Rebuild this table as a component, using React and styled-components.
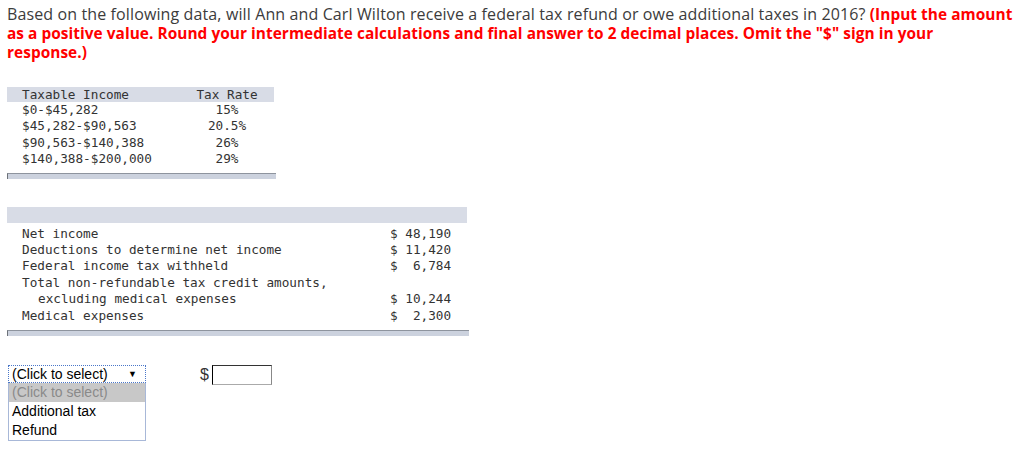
import styled, { createGlobalStyle } from "styled-components";

const Global = createGlobalStyle`
  body {
    margin: 0;
    background: #fff;
  }
`;

const Page = styled.div`
  padding: 5px 7px 0 7px;
`;

const Question = styled.p`
  margin: 0;
  font-family: "Open Sans", "Liberation Sans", sans-serif;
  font-size: 16px;
  line-height: 18px;
  color: #3c3c3c;
  letter-spacing: 0.12px;
`;

const Hint = styled.strong`
  color: #f00;
  font-weight: 700;
  font-size: 15.4px;
  letter-spacing: 0.05px;
`;

const DataTable = styled.div`
  width: ${(p) => p.$width}px;
  margin-top: ${(p) => p.$top}px;
  font-family: "DejaVu Sans Mono", "Liberation Mono", monospace;
  font-size: 12.7px;
  color: #333;
`;

const HeadRow = styled.div`
  display: grid;
  grid-template-columns: ${(p) => p.$cols};
  background: #d8dce6;
  height: ${(p) => p.$h}px;
  line-height: ${(p) => p.$h}px;
  padding: 0 ${(p) => p.$right ?? 15}px 0 15px;
`;

const Row = styled.div`
  display: grid;
  grid-template-columns: ${(p) => p.$cols};
  line-height: 16.4px;
  padding: 0 ${(p) => p.$right ?? 15}px 0 15px;
  white-space: pre;
`;

const Cell = styled.span`
  text-align: ${(p) => p.$align || "left"};
  padding-left: ${(p) => p.$indent || 0}px;
`;

const Body = styled.div`
  padding: ${(p) => p.$pad};
`;

const Foot = styled.div`
  height: 6px;
  background: #ccd2de;
  border-top: 1px solid #8e949e;
  border-left: 1px solid #6d7279;
  box-sizing: border-box;
  width: ${(p) => p.$width}px;
`;

const Answer = styled.div`
  display: flex;
  align-items: flex-start;
  margin-top: 29px;
  padding-left: 1px;
  font-family: Arial, "Liberation Sans", sans-serif;
  font-size: 14px;
`;

const SelectWrap = styled.div`
  width: 138px;
`;

const SelectBox = styled.div`
  height: 18px;
  box-sizing: border-box;
  border: 1px dotted #1a3a8c;
  outline: 1px dotted #4a77c9;
  outline-offset: -1px;
  display: flex;
  align-items: center;
  justify-content: space-between;
  padding: 0 8px 0 3px;
  color: #000;
  line-height: 16px;
`;

const Arrow = styled.span`
  font-size: 9px;
`;

const OptionList = styled.div`
  border: 1px solid #a8b8d8;
  border-top: none;
  background: #fff;
`;

const Option = styled.div`
  height: 19px;
  line-height: 19px;
  padding-left: 3px;
  color: ${(p) => (p.$muted ? "#8a8a8a" : "#000")};
  background: ${(p) => (p.$muted ? "#c8c8c8" : "transparent")};
`;

const Dollar = styled.span`
  margin-left: 54px;
  font-size: 16px;
  color: #333;
  line-height: 19px;
`;

const AmountInput = styled.div`
  width: 60px;
  height: 20px;
  box-sizing: border-box;
  margin-left: 3px;
  border: 1px solid #000;
  border-top-color: #333;
  border-right-color: #888;
  border-bottom-color: #aaa;
`;

const rates = [
  ["$0-$45,282", "15%"],
  ["$45,282-$90,563", "20.5%"],
  ["$90,563-$140,388", "26%"],
  ["$140,388-$200,000", "29%"],
];

const facts = [
  ["Net income", "$ 48,190"],
  ["Deductions to determine net income", "$ 11,420"],
  ["Federal income tax withheld", "$  6,784"],
  ["Total non-refundable tax credit amounts,", ""],
  ["excluding medical expenses", "$ 10,244", 16],
  ["Medical expenses", "$  2,300"],
];

export default function App() {
  return (
    <Page>
      <Global />
      <Question>
        Based on the following data, will Ann and Carl Wilton receive a federal tax refund or owe
        additional taxes in 2016? <Hint>(Input the amount<br />as a positive value. Round your
        intermediate calculations and final answer to 2 decimal places. Omit the "$" sign in your<br />
        response.)</Hint>
      </Question>

      <DataTable $width={267} $top={25}>
        <HeadRow $cols="1fr 88px" $h={15} $right={3}>
          <Cell>Taxable Income</Cell>
          <Cell $align="center">Tax Rate</Cell>
        </HeadRow>
        <Body $pad="0 0 5px">
          {rates.map(([range, rate]) => (
            <Row key={range} $cols="1fr 88px" $right={3}>
              <Cell>{range}</Cell>
              <Cell $align="center">{rate}</Cell>
            </Row>
          ))}
        </Body>
        <Foot $width={269} />
      </DataTable>

      <DataTable $width={460} $top={28}>
        <HeadRow $cols="1fr" $h={16} />
        <Body $pad="3px 0 6px">
          {facts.map(([label, value, indent]) => (
            <Row key={label} $cols="1fr 62px">
              <Cell $indent={indent}>{label}</Cell>
              <Cell>{value}</Cell>
            </Row>
          ))}
        </Body>
        <Foot $width={462} />
      </DataTable>

      <Answer>
        <SelectWrap>
          <SelectBox>
            <span>(Click to select)</span>
            <Arrow>▼</Arrow>
          </SelectBox>
          <OptionList>
            <Option $muted>(Click to select)</Option>
            <Option>Additional tax</Option>
            <Option>Refund</Option>
          </OptionList>
        </SelectWrap>
        <Dollar>$</Dollar>
        <AmountInput />
      </Answer>
    </Page>
  );
}
